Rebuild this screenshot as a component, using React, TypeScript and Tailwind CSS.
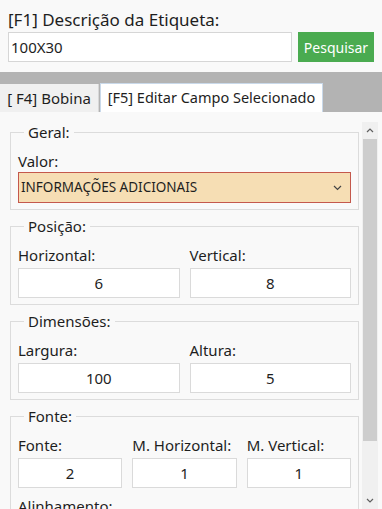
import React from 'react';

const font = { fontFamily: '"Noto Sans", "Open Sans", sans-serif' };

function Field({ label, value }: { label: string; value: string }) {
    return (
        <div className="flex flex-col">
            <span className="text-[15px] leading-[20px] text-[#1e1e1e]">{label}</span>
            <div className="mt-[3px] h-[30px] bg-white border border-[#dadada] flex items-center justify-center text-[15px] text-[#1e1e1e]">
                {value}
            </div>
        </div>
    );
}

function Group({ title, first, children }: { title: string; first?: boolean; children: React.ReactNode }) {
    return (
        <fieldset className={`border border-[#dcdcdc] px-[7px] pb-[6px] ${first ? '' : 'mt-[6px]'}`}>
            <legend className="ml-[6px] px-[4px] text-[15px] leading-[20px] text-[#1e1e1e]">{title}</legend>
            <div className="pt-[9px]">{children}</div>
        </fieldset>
    );
}

export default function App() {
    return (
        <div className="w-[382px] h-[509px] overflow-hidden bg-[#f9f9f9] flex flex-col" style={font}>
            {/* Cabeçalho */}
            <div className="px-2 pt-[8px] h-[72px]">
                <div className="text-[17px] leading-[24px] text-[#1e1e1e]">[F1] Descrição da Etiqueta:</div>
                <div className="flex gap-[6px]">
                    <div className="flex-1 h-[30px] bg-white border border-[#d6d6d6] flex items-center px-[2px] text-[15px] text-[#1e1e1e]">
                        100X30
                    </div>
                    <button className="w-[76px] h-[30px] bg-[#4aab50] text-white text-[14px]">Pesquisar</button>
                </div>
            </div>

            {/* Abas */}
            <div className="bg-[#b3b3b3] pt-[11px] flex items-end">
                <div className="w-[99px] h-[28px] bg-[#f0f0f0] border-r border-[#d8d8d8] flex items-center justify-center text-[15px] text-[#1e1e1e]">
                    [ F4] Bobina
                </div>
                <div className="ml-[1px] w-[223px] h-[29px] bg-white border border-[#c9d9ea] border-b-0 flex items-center justify-center text-[14.5px] text-[#1e1e1e]">
                    [F5] Editar Campo Selecionado
                </div>
            </div>

            {/* Conteúdo */}
            <div className="flex-1 flex pr-[4px] min-h-0">
                <div className="flex-1 pl-[10px] pr-[3px] pt-[10px] min-w-0">
                    <Group title="Geral:" first>
                        <div className="flex flex-col">
                            <span className="text-[15px] leading-[20px] text-[#1e1e1e]">Valor:</span>
                            <div className="mt-[1px] h-[31px] bg-[#f6deb4] border border-[#c4584c] flex items-center justify-between pl-[2px] pr-[8px] text-[13.5px] text-[#1e1e1e]">
                                <span>INFORMAÇÕES ADICIONAIS</span>
                                <svg width="9" height="6" viewBox="0 0 9 6" fill="none" stroke="#444" strokeWidth="1.2">
                                    <path d="M1 1l3.5 3.5L8 1" />
                                </svg>
                            </div>
                        </div>
                    </Group>

                    <Group title="Posição:">
                        <div className="grid grid-cols-2 gap-[10px]">
                            <Field label="Horizontal:" value="6" />
                            <Field label="Vertical:" value="8" />
                        </div>
                    </Group>

                    <Group title="Dimensões:">
                        <div className="grid grid-cols-2 gap-[10px]">
                            <Field label="Largura:" value="100" />
                            <Field label="Altura:" value="5" />
                        </div>
                    </Group>

                    <Group title="Fonte:">
                        <div className="grid grid-cols-3 gap-[10px]">
                            <Field label="Fonte:" value="2" />
                            <Field label="M. Horizontal:" value="1" />
                            <Field label="M. Vertical:" value="1" />
                        </div>
                        <div className="mt-[8px] text-[15px] leading-[20px] text-[#1e1e1e]">Alinhamento:</div>
                    </Group>
                </div>

                {/* Barra de rolagem */}
                <div className="w-[16px] mt-[10px] bg-[#f0f0f0] flex flex-col">
                    <div className="h-[17px] flex items-center justify-center">
                        <svg width="8" height="5" viewBox="0 0 8 5" fill="none" stroke="#606060" strokeWidth="1.2">
                            <path d="M1 4l3-3 3 3" />
                        </svg>
                    </div>
                    <div className="h-[302px] mx-[1px] bg-[#cdcdcd]" />
                    <div className="flex-1" />
                    <div className="h-[17px] flex items-center justify-center">
                        <svg width="8" height="5" viewBox="0 0 8 5" fill="none" stroke="#606060" strokeWidth="1.2">
                            <path d="M1 1l3 3 3-3" />
                        </svg>
                    </div>
                </div>
            </div>
        </div>
    );
}
